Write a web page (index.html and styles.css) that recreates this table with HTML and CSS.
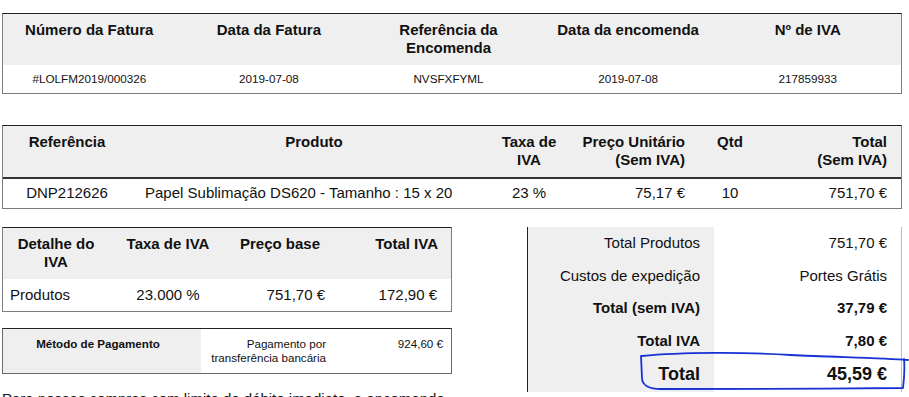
FILE: index.html
```html
<!DOCTYPE html>
<html lang="pt">
<head>
<meta charset="utf-8">
<title>Fatura</title>
<link rel="stylesheet" href="styles.css">
</head>
<body>
<div class="page">

  <div class="info">
    <div class="th">Número da Fatura</div>
    <div class="th">Data da Fatura</div>
    <div class="th">Referência da<br>Encomenda</div>
    <div class="th">Data da encomenda</div>
    <div class="th">Nº de IVA</div>
    <div class="td">#LOLFM2019/000326</div>
    <div class="td">2019-07-08</div>
    <div class="td">NVSFXFYML</div>
    <div class="td">2019-07-08</div>
    <div class="td">217859933</div>
  </div>

  <div class="products">
    <div class="th c">Referência</div>
    <div class="th c">Produto</div>
    <div class="th c">Taxa de<br>IVA</div>
    <div class="th r price">Preço Unitário<br>(Sem IVA)</div>
    <div class="th c">Qtd</div>
    <div class="th r total">Total<br>(Sem IVA)</div>
    <div class="td c">DNP212626</div>
    <div class="td l name">Papel Sublimação DS620 - Tamanho : 15 x 20</div>
    <div class="td c">23 %</div>
    <div class="td r price">75,17 €</div>
    <div class="td c">10</div>
    <div class="td r total">751,70 €</div>
  </div>

  <div class="bottom">
    <div class="left">
      <div class="vat">
        <div class="th c">Detalhe do<br>IVA</div>
        <div class="th c">Taxa de IVA</div>
        <div class="th c">Preço base</div>
        <div class="th r">Total IVA</div>
        <div class="td l">Produtos</div>
        <div class="td c">23.000 %</div>
        <div class="td r">751,70 €</div>
        <div class="td r">172,90 €</div>
      </div>

      <div class="payment">
        <div class="pm-label">Método de Pagamento</div>
        <div class="pm-method">Pagamento por<br>transferência bancária</div>
        <div class="pm-amount">924,60 €</div>
      </div>
    </div>

    <div class="totals">
      <div class="lbl">Total Produtos</div>
      <div class="val">751,70 €</div>
      <div class="lbl">Custos de expedição</div>
      <div class="val">Portes Grátis</div>
      <div class="lbl b">Total (sem IVA)</div>
      <div class="val b">37,79 €</div>
      <div class="lbl b">Total IVA</div>
      <div class="val b">7,80 €</div>
      <div class="lbl big">Total</div>
      <div class="val big">45,59 €</div>
      <svg class="mark" viewBox="527 227 390 170" width="390" height="170" aria-hidden="true">
        <path d="M641,356 C680,352 745,352 790,355 C830,357 880,358 907,360 M903,359 C904,370 903,380 902,388 C820,389 720,389 660,389 C648,389 641,385 641,378 L640,356" fill="none" stroke="#1631d4" stroke-width="1.8" stroke-linecap="round" stroke-linejoin="round"/>
      </svg>
    </div>
  </div>

  <p class="note">Para nossas compras com limite de débito imediato, a encomenda</p>
</div>
</body>
</html>
```

FILE: styles.css
```css
* { box-sizing: border-box; }

html, body {
  margin: 0;
  padding: 0;
  background: #fff;
}

body {
  font-family: "Liberation Sans", Arial, sans-serif;
  color: #111;
  overflow: hidden;
}

.page {
  padding: 13px 0 0 2px;
  width: 904px;
}

.th {
  background: #efefef;
  font-weight: bold;
  font-size: 15px;
  line-height: 18px;
  padding: 7px 0 8px 0;
}

.c { text-align: center; }
.r { text-align: right; }
.l { text-align: left; }

/* Table 1 */
.info {
  width: 900px;
  display: grid;
  grid-template-columns: repeat(5, 1fr);
  border: 1px solid #7d7d7d;
  border-top-color: #222;
}

.info .th {
  text-align: center;
  padding-right: 7px;
}

.info .td {
  text-align: center;
  font-size: 11.7px;
  line-height: 14px;
  padding: 7px 7px 7px 0;
}

/* Table 2 */
.products {
  margin-top: 31px;
  width: 900px;
  display: grid;
  grid-template-columns: 128px 366px 64px 134px 70px 136px;
  border: 1px solid #7d7d7d;
  border-top-color: #222;
}

.products .th {
  border-bottom: 2px solid #333;
}

.products .td {
  font-size: 15px;
  line-height: 18px;
  padding: 5px 0 6px 0;
}

.products .price { padding-right: 10px; }
.products .total { padding-right: 14px; }
.products .name { padding-left: 14px; white-space: nowrap; }

/* Bottom area */
.bottom {
  margin-top: 18px;
  width: 900px;
  display: flex;
  justify-content: space-between;
  align-items: flex-start;
}

.left {
  width: 450px;
  display: flex;
  flex-direction: column;
  gap: 16px;
}

.vat {
  display: grid;
  grid-template-columns: repeat(4, 1fr);
  border: 1px solid #7d7d7d;
  border-top-color: #222;
}

.vat .th.c { padding-right: 6px; }
.vat .th.r { padding-right: 13px; }

.vat .td {
  font-size: 15px;
  line-height: 18px;
  padding: 7px 0 7px 0;
}

.vat .td.l { padding-left: 7px; }
.vat .td.c { padding-right: 6px; }
.vat .td.r { padding-right: 14px; }

.payment {
  display: grid;
  grid-template-columns: 198px 135px 115px;
  border: 1px solid #6a6a6a;
  border-top-color: #222;
  font-size: 11.6px;
  line-height: 13.5px;
}

.payment > div {
  padding: 8px 0 9px 0;
}

.pm-label {
  background: #efefef;
  font-weight: bold;
  text-align: center;
  padding-right: 8px !important;
}

.pm-method {
  text-align: right;
  padding-right: 10px !important;
}

.pm-amount {
  text-align: right;
  padding-right: 8px !important;
}

/* Totals */
.totals {
  position: relative;
  width: 375px;
  display: grid;
  grid-template-columns: 186px 187px;
  border-left: 1px solid #222;
  border-right: 1px solid #bdbdbd;
}

.totals .lbl,
.totals .val {
  font-size: 15px;
  line-height: 18px;
  padding: 7px 14px 7.5px 0;
  text-align: right;
}

.totals .lbl { background: #efefef; }
.totals .val { background: #fff; }

.totals .b { font-weight: bold; }

.totals .big {
  font-weight: bold;
  font-size: 18px;
  line-height: 21px;
  padding-top: 7px;
  padding-bottom: 7px;
}

.mark {
  position: absolute;
  left: 0;
  top: 0;
  overflow: visible;
  pointer-events: none;
}

.note {
  margin: -1px 0 0 0;
  font-size: 15px;
  line-height: 16px;
  white-space: nowrap;
}
```
